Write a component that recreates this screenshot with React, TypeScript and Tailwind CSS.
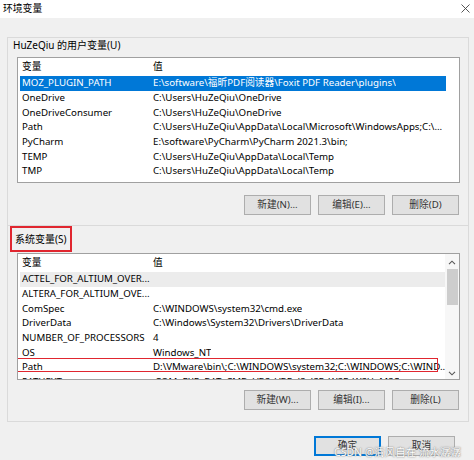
import React from "react";

const FONT = { fontFamily: '"Noto Sans", "Noto Sans CJK SC", sans-serif' };

type Row = { n: string; v: string; sel?: boolean; hover?: boolean; mark?: boolean };

const userRows: Row[] = [
  { n: "MOZ_PLUGIN_PATH", v: "E:\\software\\福昕PDF阅读器\\Foxit PDF Reader\\plugins\\", sel: true },
  { n: "OneDrive", v: "C:\\Users\\HuZeQiu\\OneDrive" },
  { n: "OneDriveConsumer", v: "C:\\Users\\HuZeQiu\\OneDrive" },
  { n: "Path", v: "C:\\Users\\HuZeQiu\\AppData\\Local\\Microsoft\\WindowsApps;C:\\..." },
  { n: "PyCharm", v: "E:\\software\\PyCharm\\PyCharm 2021.3\\bin;" },
  { n: "TEMP", v: "C:\\Users\\HuZeQiu\\AppData\\Local\\Temp" },
  { n: "TMP", v: "C:\\Users\\HuZeQiu\\AppData\\Local\\Temp" },
];

const sysRows: Row[] = [
  { n: "ACTEL_FOR_ALTIUM_OVER...", v: "", hover: true },
  { n: "ALTERA_FOR_ALTIUM_OVE...", v: "" },
  { n: "ComSpec", v: "C:\\WINDOWS\\system32\\cmd.exe" },
  { n: "DriverData", v: "C:\\Windows\\System32\\Drivers\\DriverData" },
  { n: "NUMBER_OF_PROCESSORS", v: "4" },
  { n: "OS", v: "Windows_NT" },
  { n: "Path", v: "D:\\VMware\\bin\\;C:\\WINDOWS\\system32;C:\\WINDOWS;C:\\WIND...", mark: true },
  { n: "PATHEXT", v: ".COM;.EXE;.BAT;.CMD;.VBS;.VBE;.JS;.JSE;.WSF;.WSH;.MSC" },
];

function ListRow({ r }: { r: Row }) {
  const bg = r.sel ? "bg-[#0078d7] text-white" : r.hover ? "bg-[#ececec] text-black" : "text-black";
  return (
    <div className={`relative ml-[2px] flex h-[14.67px] w-[426px] shrink-0 items-center whitespace-nowrap leading-[14px] ${bg}`}>
      <div className="w-[131px] shrink-0 overflow-hidden pl-[2px]">{r.n}</div>
      <div className="min-w-0 overflow-hidden pl-[2px]">{r.v}</div>
      {r.mark && (
        <div className="absolute left-[-5px] top-[-2px] h-[14px] w-[423px] border-[1.5px] border-[#e0262f]" />
      )}
    </div>
  );
}

function Header() {
  return (
    <div className="ml-[2px] flex h-[18px] shrink-0 items-center text-black">
      <div className="w-[131px] pl-[2px]">变量</div>
      <div className="pl-[2px]">值</div>
    </div>
  );
}

function Btn({ label, focus }: { label: string; focus?: boolean }) {
  return (
    <div
      className={`flex h-[20px] w-[67px] items-center justify-center whitespace-nowrap bg-[#e1e1e1] text-[#333] ${
        focus ? "border-2 border-[#0078d7]" : "border border-[#adadad]"
      }`}
    >
      {label}
    </div>
  );
}

export default function App() {
  return (
    <div className="relative h-[460px] w-[474px] overflow-hidden bg-[#f0f0f0] text-[9.7px] leading-none" style={FONT}>
      {/* title bar */}
      <div className="flex h-[18px] items-center justify-between bg-white pl-[3px] pr-[4px]">
        <span className="text-[9.8px] text-black">环境变量</span>
        <svg width="9" height="9" viewBox="0 0 9 9" className="mt-[-2px]">
          <path d="M0.5 0.5 L8.5 8.5 M8.5 0.5 L0.5 8.5" stroke="#444" strokeWidth="0.9" />
        </svg>
      </div>

      <div className="ml-[7px] mt-[19px] w-[462px]">
        {/* user panel */}
        <div className="flex h-[189px] flex-col border border-[#dadada]">
          <div className="ml-[5px] mt-[2px] h-[12px] whitespace-nowrap text-[10px] text-black">HuZeQiu 的用户变量(U)</div>
          <div className="ml-[9px] mt-[5px] flex h-[126px] w-[443px] flex-col border border-[#a0a0a0] bg-white">
            <Header />
            {userRows.map((r) => (
              <ListRow key={r.n} r={r} />
            ))}
          </div>
          <div className="ml-[236px] mt-[12px] flex gap-[7px]">
            <Btn label="新建(N)..." />
            <Btn label="编辑(E)..." />
            <Btn label="删除(D)" />
          </div>
        </div>

        {/* system panel */}
        <div className="flex h-[196px] flex-col border border-t-0 border-[#dadada]">
          <div className="ml-[2px] flex h-[26px] w-[62px] items-center whitespace-nowrap border-2 border-[#e0262f] pl-[3px] text-[10px] text-black">
            系统变量(S)
          </div>
          <div className="relative ml-[9px] mt-[1px] flex h-[127px] w-[443px] flex-col overflow-hidden border border-[#a0a0a0] bg-white">
            <Header />
            {sysRows.map((r) => (
              <ListRow key={r.n} r={r} />
            ))}
            {/* scrollbar */}
            <div className="absolute right-0 top-0 flex h-full w-[14px] flex-col items-center bg-[#f7f7f7]">
              <svg width="8" height="5" viewBox="0 0 8 5" className="mt-[6px]">
                <path d="M1 4.2 L4 1.2 L7 4.2" stroke="#555" strokeWidth="1.1" fill="none" />
              </svg>
              <div className="mt-[4px] h-[36px] w-[11px] bg-[#cdcdcd]" />
              <div className="flex-1" />
              <svg width="8" height="5" viewBox="0 0 8 5" className="mb-[3px]">
                <path d="M1 0.8 L4 3.8 L7 0.8" stroke="#555" strokeWidth="1.1" fill="none" />
              </svg>
            </div>
          </div>
          <div className="ml-[236px] mt-[10px] flex gap-[7px]">
            <Btn label="新建(W)..." />
            <Btn label="编辑(I)..." />
            <Btn label="删除(L)" />
          </div>
        </div>

        <div className="ml-[307px] mt-[14px] flex gap-[7px]">
          <Btn label="确定" focus />
          <Btn label="取消" />
        </div>
      </div>

      {/* watermark */}
      <div className="absolute left-[334px] top-[447px] whitespace-nowrap text-[10.5px] text-white [text-shadow:0_0_1px_#777,0_0_2px_#999]">
        CSDN @清风自在 流水潺潺
      </div>
    </div>
  );
}
